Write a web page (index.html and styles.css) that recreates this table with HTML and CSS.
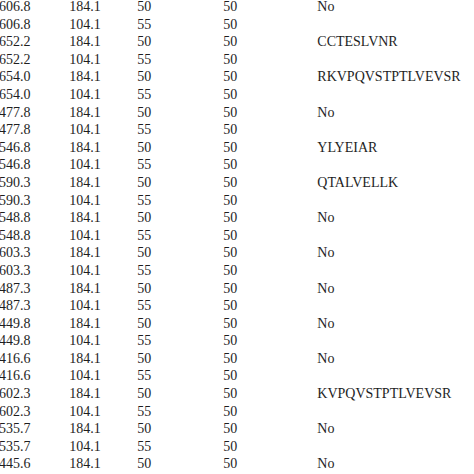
FILE: index.html
```html
<!DOCTYPE html>
<html>
<head>
<meta charset="utf-8">
<link rel="stylesheet" href="styles.css">
</head>
<body>
<div class="table">
<div class="row"><span>606.8</span><span>184.1</span><span>50</span><span>50</span><span>No</span></div>
<div class="row"><span>606.8</span><span>104.1</span><span>55</span><span>50</span><span></span></div>
<div class="row"><span>652.2</span><span>184.1</span><span>50</span><span>50</span><span>CCTESLVNR</span></div>
<div class="row"><span>652.2</span><span>104.1</span><span>55</span><span>50</span><span></span></div>
<div class="row"><span>654.0</span><span>184.1</span><span>50</span><span>50</span><span>RKVPQVSTPTLVEVSR</span></div>
<div class="row"><span>654.0</span><span>104.1</span><span>55</span><span>50</span><span></span></div>
<div class="row"><span>477.8</span><span>184.1</span><span>50</span><span>50</span><span>No</span></div>
<div class="row"><span>477.8</span><span>104.1</span><span>55</span><span>50</span><span></span></div>
<div class="row"><span>546.8</span><span>184.1</span><span>50</span><span>50</span><span>YLYEIAR</span></div>
<div class="row"><span>546.8</span><span>104.1</span><span>55</span><span>50</span><span></span></div>
<div class="row"><span>590.3</span><span>184.1</span><span>50</span><span>50</span><span>QTALVELLK</span></div>
<div class="row"><span>590.3</span><span>104.1</span><span>55</span><span>50</span><span></span></div>
<div class="row"><span>548.8</span><span>184.1</span><span>50</span><span>50</span><span>No</span></div>
<div class="row"><span>548.8</span><span>104.1</span><span>55</span><span>50</span><span></span></div>
<div class="row"><span>603.3</span><span>184.1</span><span>50</span><span>50</span><span>No</span></div>
<div class="row"><span>603.3</span><span>104.1</span><span>55</span><span>50</span><span></span></div>
<div class="row"><span>487.3</span><span>184.1</span><span>50</span><span>50</span><span>No</span></div>
<div class="row"><span>487.3</span><span>104.1</span><span>55</span><span>50</span><span></span></div>
<div class="row"><span>449.8</span><span>184.1</span><span>50</span><span>50</span><span>No</span></div>
<div class="row"><span>449.8</span><span>104.1</span><span>55</span><span>50</span><span></span></div>
<div class="row"><span>416.6</span><span>184.1</span><span>50</span><span>50</span><span>No</span></div>
<div class="row"><span>416.6</span><span>104.1</span><span>55</span><span>50</span><span></span></div>
<div class="row"><span>602.3</span><span>184.1</span><span>50</span><span>50</span><span>KVPQVSTPTLVEVSR</span></div>
<div class="row"><span>602.3</span><span>104.1</span><span>55</span><span>50</span><span></span></div>
<div class="row"><span>535.7</span><span>184.1</span><span>50</span><span>50</span><span>No</span></div>
<div class="row"><span>535.7</span><span>104.1</span><span>55</span><span>50</span><span></span></div>
<div class="row"><span>445.6</span><span>184.1</span><span>50</span><span>50</span><span>No</span></div>
</div>
</body>
</html>
```
FILE: styles.css
```css
html, body {
  margin: 0;
  padding: 0;
  background: #ffffff;
  overflow: hidden;
}
.table {
  margin: -2px 0 0 -1px;
  font-family: "Liberation Serif", "Times New Roman", serif;
  font-size: 14px;
  line-height: 17.6px;
  color: #1e1e1e;
}
.row {
  display: grid;
  grid-template-columns: 70.3px 68px 86px 94px auto;
  white-space: nowrap;
}
```
